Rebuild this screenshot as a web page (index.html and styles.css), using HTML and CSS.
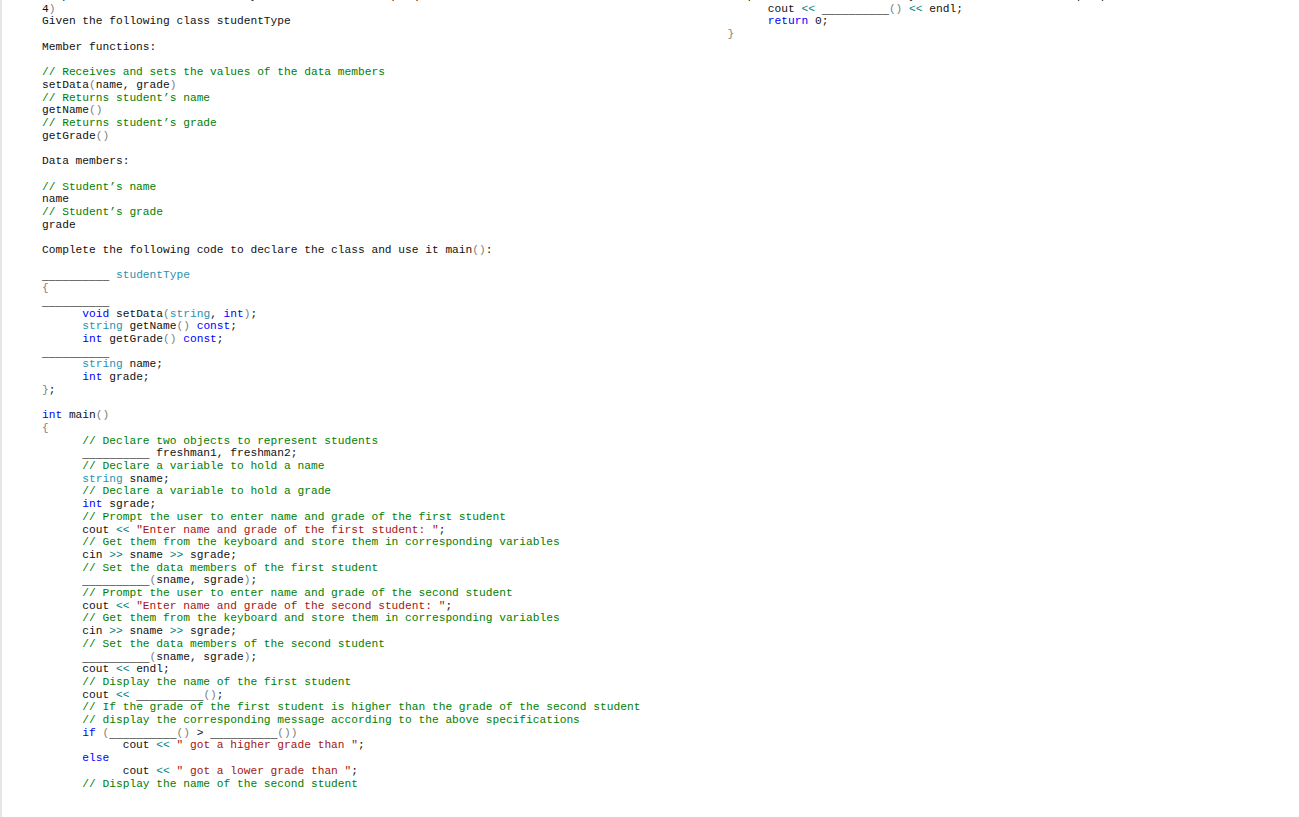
FILE: index.html
```html
<!DOCTYPE html>
<html lang="en">
<head>
<meta charset="utf-8">
<title>Question 4</title>
<link rel="stylesheet" href="styles.css">
</head>
<body>
<main class="page">
<pre class="col col-left">   p                           y                    p  q
4<span class="p">)</span>
Given the following class studentType

Member functions:

<span class="c">// Receives and sets the values of the data members</span>
setData<span class="p">(</span>name, grade<span class="p">)</span>
<span class="c">// Returns student’s name</span>
getName<span class="p">()</span>
<span class="c">// Returns student’s grade</span>
getGrade<span class="p">()</span>

Data members:

<span class="c">// Student’s name</span>
name
<span class="c">// Student’s grade</span>
grade

Complete the following code to declare the class and use it main<span class="p">()</span>:

<span class="b">__________</span> <span class="t">studentType</span>
<span class="p">{</span>
<span class="b">__________</span>
      <span class="k">void</span> setData<span class="p">(</span><span class="t">string</span>, <span class="k">int</span><span class="p">)</span>;
      <span class="t">string</span> getName<span class="p">()</span> <span class="k">const</span>;
      <span class="k">int</span> getGrade<span class="p">()</span> <span class="k">const</span>;
<span class="b">__________</span>
      <span class="t">string</span> name;
      <span class="k">int</span> grade;
<span class="p">}</span>;

<span class="k">int</span> main<span class="p">()</span>
<span class="p">{</span>
      <span class="c">// Declare two objects to represent students</span>
      <span class="b">__________</span> freshman1, freshman2;
      <span class="c">// Declare a variable to hold a name</span>
      <span class="t">string</span> sname;
      <span class="c">// Declare a variable to hold a grade</span>
      <span class="k">int</span> sgrade;
      <span class="c">// Prompt the user to enter name and grade of the first student</span>
      cout <span class="o">&lt;&lt;</span> <span class="s">"Enter name and grade of the first student: "</span>;
      <span class="c">// Get them from the keyboard and store them in corresponding variables</span>
      cin <span class="o">&gt;&gt;</span> sname <span class="o">&gt;&gt;</span> sgrade;
      <span class="c">// Set the data members of the first student</span>
      <span class="b">__________</span><span class="p">(</span>sname, sgrade<span class="p">)</span>;
      <span class="c">// Prompt the user to enter name and grade of the second student</span>
      cout <span class="o">&lt;&lt;</span> <span class="s">"Enter name and grade of the second student: "</span>;
      <span class="c">// Get them from the keyboard and store them in corresponding variables</span>
      cin <span class="o">&gt;&gt;</span> sname <span class="o">&gt;&gt;</span> sgrade;
      <span class="c">// Set the data members of the second student</span>
      <span class="b">__________</span><span class="p">(</span>sname, sgrade<span class="p">)</span>;
      cout <span class="o">&lt;&lt;</span> endl;
      <span class="c">// Display the name of the first student</span>
      cout <span class="o">&lt;&lt;</span> <span class="b">__________</span><span class="p">()</span>;
      <span class="c">// If the grade of the first student is higher than the grade of the second student</span>
      <span class="c">// display the corresponding message according to the above specifications</span>
      <span class="k">if</span> <span class="p">(</span><span class="b">__________</span><span class="p">()</span> &gt; <span class="b">__________</span><span class="p">())</span>
            cout <span class="o">&lt;&lt;</span> <span class="s">" got a higher grade than "</span>;
      <span class="k">else</span>
            cout <span class="o">&lt;&lt;</span> <span class="s">" got a lower grade than "</span>;
      <span class="c">// Display the name of the second student</span></pre>
<pre class="col col-right">   p                       y                        p  q
      cout <span class="o">&lt;&lt;</span> <span class="b">__________</span><span class="p">()</span> <span class="o">&lt;&lt;</span> endl;
      <span class="k">return</span> 0;
<span class="p">}</span></pre>
</main>
</body>
</html>
```
FILE: styles.css
```css
html, body {
  margin: 0;
  padding: 0;
  height: 100%;
  background: #ffffff;
}

body {
  overflow: hidden;
}

.page {
  display: flex;
  height: 817px;
  overflow: hidden;
  border-left: 2px solid #e6e6e6;
  box-sizing: border-box;
}

.col {
  margin: -10px 0 0;
  padding-left: 40px;
  box-sizing: border-box;
  font-family: "Liberation Mono", "Courier New", monospace;
  font-size: 11.21px;
  line-height: 12.7px;
  color: #111111;
  white-space: pre;
}

.col-left {
  flex: 0 0 685.5px;
}

.col-right {
  flex: 1 1 auto;
}

.c { color: #008000; }
.k { color: #0000ff; }
.t { color: #2b91af; }
.s { color: #a31515; }
.o { color: #008080; }
.p { color: #808080; }

.b {
  color: #000000;
  line-height: 0;
  vertical-align: -2px;
}
```
